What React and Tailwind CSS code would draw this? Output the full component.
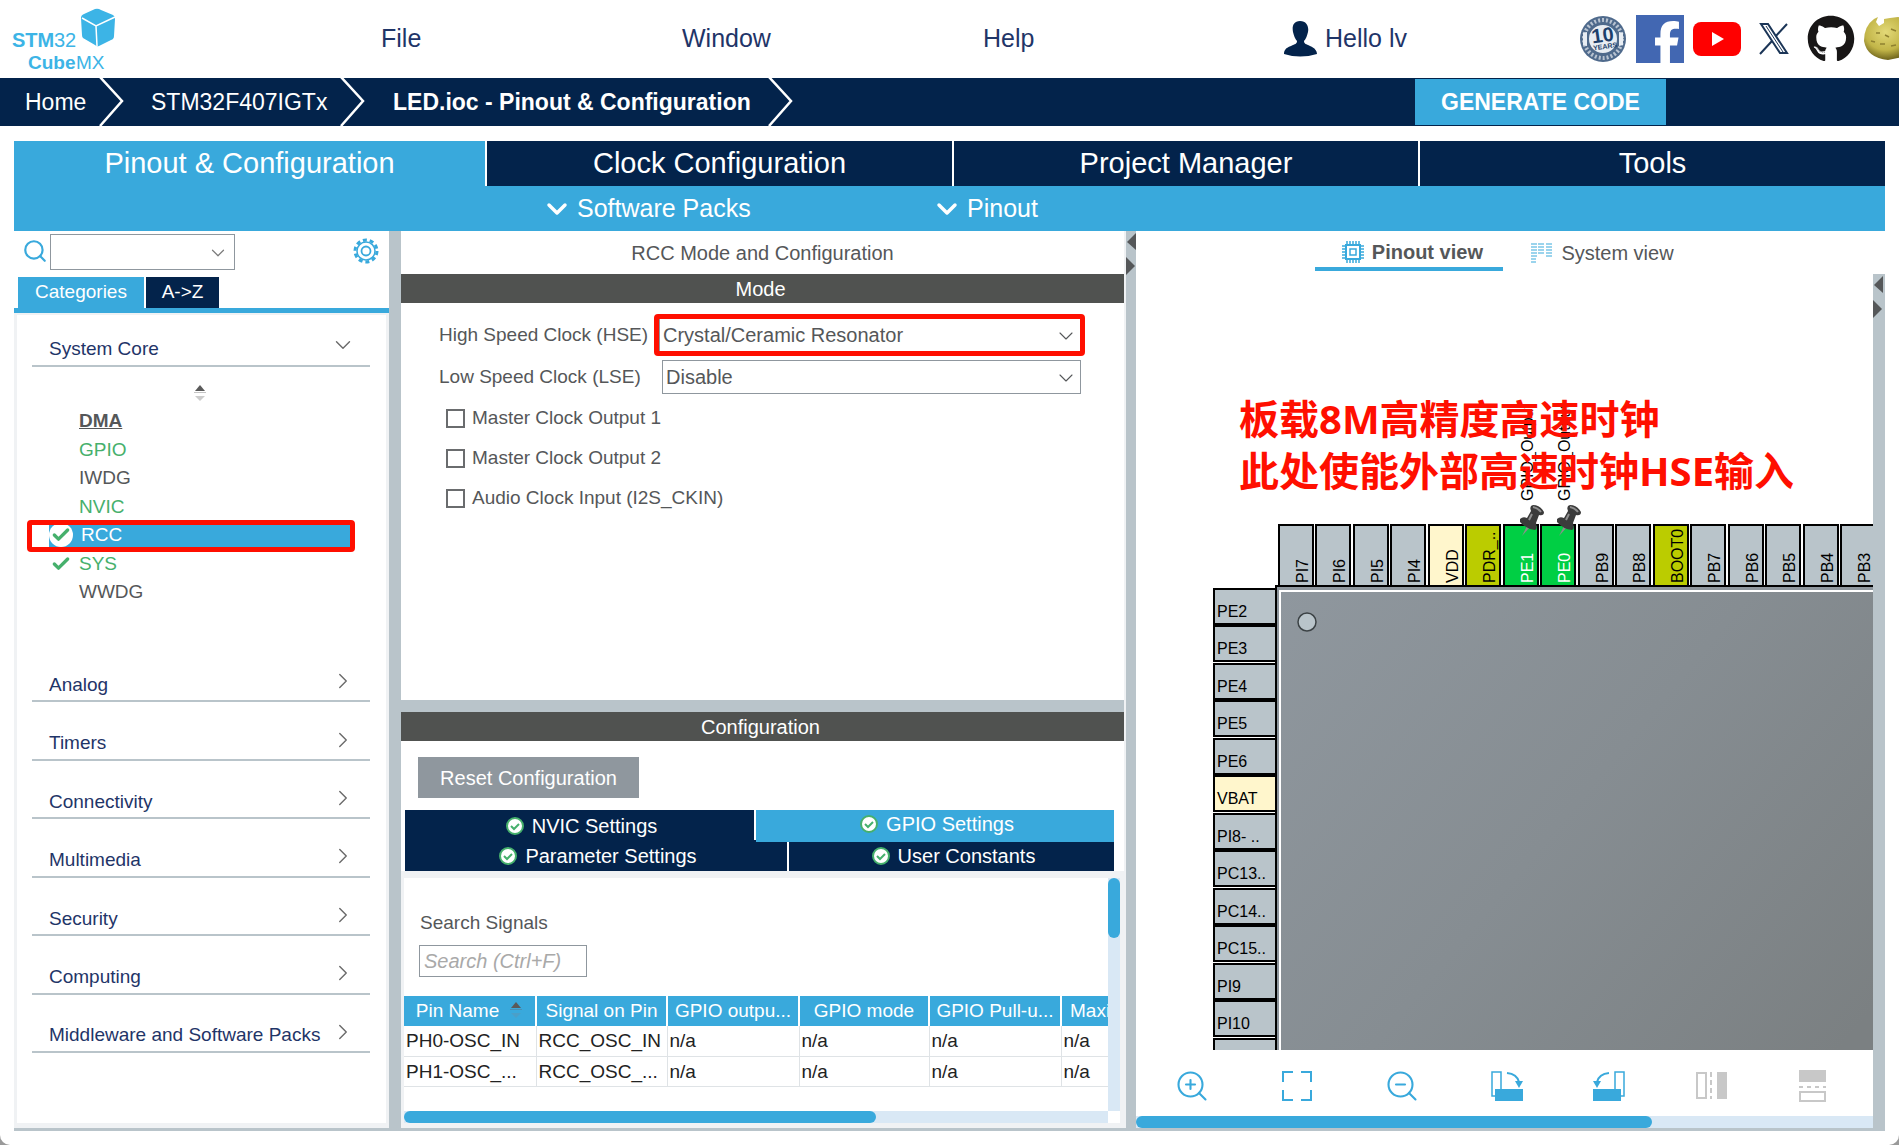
import React, { useState } from 'react'
import { Search, ChevronDown, ChevronRight, ZoomIn, ZoomOut, Check } from 'lucide-react'
import { FaGithub, FaFacebookF } from 'react-icons/fa6'

const MENU = ["File", "Window", "Help"]
const TABS = ["Pinout & Configuration", "Clock Configuration", "Project Manager", "Tools"]
const CATEGORIES = ["Analog", "Timers", "Connectivity", "Multimedia", "Security", "Computing", "Middleware and Software Packs"]

const CORE_ITEMS = [
  { name: "DMA", style: "text-[#555759] font-bold underline" },
  { name: "GPIO", style: "text-[#46b06c]" },
  { name: "IWDG", style: "text-[#555759]" },
  { name: "NVIC", style: "text-[#46b06c]" },
  { name: "RCC", style: "text-white", selected: true },
  { name: "SYS", style: "text-[#46b06c]", check: true },
  { name: "WWDG", style: "text-[#555759]" },
]

const COLUMNS = ["Pin Name", "Signal on Pin", "GPIO outpu...", "GPIO mode", "GPIO Pull-u...", "Maximum o..."]
const ROWS = [
  ["PH0-OSC_IN", "RCC_OSC_IN", "n/a", "n/a", "n/a", "n/a"],
  ["PH1-OSC_...", "RCC_OSC_...", "n/a", "n/a", "n/a", "n/a"],
]

const GRAY = "#b9c4ca"
const TOP_PINS = [
  ["PI7", GRAY], ["PI6", GRAY], ["PI5", GRAY], ["PI4", GRAY], ["VDD", "#fff6cc"], ["PDR_..", "#bbcc00"],
  ["PE1", "#00cf44"], ["PE0", "#00cf44"], ["PB9", GRAY], ["PB8", GRAY], ["BOOT0", "#bbcc00"],
  ["PB7", GRAY], ["PB6", GRAY], ["PB5", GRAY], ["PB4", GRAY], ["PB3", GRAY],
]
const LEFT_PINS = [
  ["PE2", GRAY], ["PE3", GRAY], ["PE4", GRAY], ["PE5", GRAY], ["PE6", GRAY], ["VBAT", "#fff6cc"],
  ["PI8- ..", GRAY], ["PC13..", GRAY], ["PC14..", GRAY], ["PC15..", GRAY], ["PI9", GRAY], ["PI10", GRAY], ["", GRAY],
]

function Logo() {
  return (
    <svg width="120" height="78" viewBox="0 0 120 78" role="img" aria-label="STM32 CubeMX">
      <g fill="#3cb4e6" fontFamily="Liberation Sans, sans-serif">
        <path d="M81 18 Q81 15 84 14 L95 9 Q98 8 101 10 L113 15 Q115 16 115 19 L114 36 Q114 39 111 40 L99 46 Q97 47 95 45 L83 38 Q82 37 82 35 Z" />
        <text x="12" y="47" fontSize="20" fontWeight="bold">STM</text>
        <text x="54" y="47" fontSize="20">32</text>
        <text x="28" y="69" fontSize="19" fontWeight="bold">Cube</text>
        <text x="76" y="69" fontSize="19">MX</text>
      </g>
      <path d="M82 18 L96 26 L115 17 M96 26 L97 46" stroke="white" strokeWidth="1.5" fill="none" />
    </svg>
  )
}

function Arrow() {
  return (
    <svg width="26" height="48" viewBox="0 0 26 48" fill="none" className="shrink-0">
      <path d="M1 -1 L23 23 L1 48" stroke="white" strokeWidth="2.5" />
    </svg>
  )
}

function AnniversaryBadge() {
  return (
    <svg width="48" height="48" viewBox="0 0 48 48" role="img" aria-label="10 years">
      <circle cx="24" cy="24" r="23" fill="#4f6a8c" />
      <circle cx="24" cy="24" r="19" fill="none" stroke="white" strokeWidth="4" strokeDasharray="2 2" opacity="0.6" />
      <path d="M4 18 L8 17 L8 31 L4 30 Z M44 18 L40 17 L40 31 L44 30 Z" fill="#e8edf3" />
      <circle cx="24" cy="24" r="15" fill="#e8edf3" stroke="#4f6a8c" strokeWidth="2" />
      <g transform="rotate(-8 24 24)" textAnchor="middle" fontWeight="bold" fill="#1d3f6b" fontFamily="Liberation Sans, sans-serif">
        <text x="24" y="27" fontSize="20">10</text>
        <text x="25" y="34" fontSize="7">YEARS</text>
      </g>
    </svg>
  )
}

function XLogo() {
  return (
    <svg width="30" height="32" viewBox="0 0 30 32" fill="none" stroke="#1b3557">
      <path d="M28 1 L16 14 M13 18 L1 31" strokeWidth="2" />
      <path d="M2 1 H9 L28 30 H21 Z" fill="white" strokeWidth="2" />
      <path d="M7 3 L24 29" strokeWidth="1" />
    </svg>
  )
}

function Globe() {
  return (
    <svg width="35" height="48" viewBox="0 0 35 48">
      <defs>
        <radialGradient id="globe" cx="0.45" cy="0.35" r="0.7">
          <stop offset="0" stopColor="#e3d978" />
          <stop offset="0.6" stopColor="#c2b548" />
          <stop offset="1" stopColor="#5c5212" />
        </radialGradient>
      </defs>
      <path d="M10 4 L14 2 L12 7 L15 11 L20 8 L20 4 L26 3 L34 2 L48 5 V40 L24 45 Q3 43 0 26 Q0 11 10 4 Z" fill="url(#globe)" />
      <path d="M12 18 h4 M21 20 l4 2 M7 26 l4 1 M16 29 h5 M27 14 l5 2 M27 31 l5 -1" stroke="#8f8130" strokeWidth="1.5" fill="none" />
    </svg>
  )
}

function Gear() {
  return (
    <svg width="26" height="26" viewBox="0 0 26 26" fill="none" stroke="#39a9dc">
      <circle cx="13" cy="13" r="11" strokeWidth="3" strokeDasharray="4 2.91" />
      <circle cx="13" cy="13" r="9" strokeWidth="1.5" />
      <circle cx="13" cy="13" r="4.5" strokeWidth="1.8" />
    </svg>
  )
}

function SortIcon({ light }) {
  return (
    <svg width="14" height="17" viewBox="0 0 14 17">
      <path d="M7 0 L12 6 H2 Z" fill="#5a5a5a" />
      <path d="M1 7.5 H13" stroke={light ? "#4b8fb4" : "#c4c4c4"} />
      <path d="M2 11 H12 L7 16 Z" fill={light ? "#4b9fc8" : "#cccccc"} />
    </svg>
  )
}

function ChipIcon() {
  return (
    <svg width="22" height="22" viewBox="0 0 22 22" fill="none" stroke="#39a9dc">
      <rect x="4" y="4" width="14" height="14" strokeWidth="2" />
      <rect x="8" y="8" width="6" height="6" strokeWidth="1.5" />
      <path d="M5 0 V4 M8 0 V4 M11 0 V4 M14 0 V4 M17 0 V4 M5 18 V22 M8 18 V22 M11 18 V22 M14 18 V22 M17 18 V22 M0 5 H4 M0 8 H4 M0 11 H4 M0 14 H4 M0 17 H4 M18 5 H22 M18 8 H22 M18 11 H22 M18 14 H22 M18 17 H22" strokeWidth="1.5" />
    </svg>
  )
}

function SystemIcon() {
  return (
    <svg width="22" height="22" viewBox="0 0 22 22" stroke="#39a9dc" strokeWidth="1.2">
      <path d="M0 2 H6 M7 2 H13 M15 2 H21 M0 5 H6 M7 5 H13 M15 5 H21 M0 8 H6 M7 8 H13 M15 8 H21 M0 11 H6 M7 11 H13 M15 11 H21 M0 14 H6 M15 14 H21 M0 17 H5 M0 20 H5" />
    </svg>
  )
}

function StatusIcon() {
  return (
    <svg width="18" height="18" viewBox="0 0 18 18">
      <circle cx="9" cy="9" r="8" fill="white" stroke="#46b06c" strokeWidth="2" />
      <path d="M5 9 L8 12 L13 7" stroke="#46b06c" strokeWidth="2" fill="none" />
    </svg>
  )
}

function SplitArrows() {
  return (
    <svg width="10" height="46" viewBox="0 0 10 46" fill="#555759">
      <path d="M10 2 V19 L1 11 Z" />
      <path d="M0 26 V44 L9 35 Z" />
    </svg>
  )
}

function Pushpin({ x, y }) {
  return (
    <g transform={`translate(${x} ${y})`}>
      <path d="M4 31 L10 19 L13 21 Z" fill="#8a8f8a" />
      <path d="M2 14 Q5 11 9 13 L13 6 Q11 1 15 0 Q22 0 26 7 Q26 11 21 10 L18 18 Q20 24 17 25 Q8 24 2 17 Z" fill="#3b3b3b" />
      <path d="M15 2 Q20 3 23 7 M14 9 L11 15" stroke="#8f8f8f" strokeWidth="2" fill="none" />
    </g>
  )
}

function ChipView() {
  return (
    <svg className="absolute inset-0 w-full h-full" fontFamily="Liberation Sans, sans-serif" fontSize="16">
      <defs>
        <linearGradient id="chip" gradientUnits="userSpaceOnUse" x1="145" y1="318" x2="700" y2="780">
          <stop offset="0" stopColor="#8f979e" />
          <stop offset="0.5" stopColor="#868d92" />
          <stop offset="1" stopColor="#7b8082" />
        </linearGradient>
      </defs>
      <rect x="140" y="312" width="1200" height="1200" fill="#8f979e" stroke="black" strokeWidth="2" />
      <rect x="144" y="317" width="1200" height="1200" fill="url(#chip)" stroke="white" strokeWidth="2" />
      <circle cx="171" cy="348" r="9" fill={GRAY} stroke="#3c4245" strokeWidth="1.5" />
      {TOP_PINS.map(([name, fill], i) => {
        const x = 143 + Math.floor(i * 37.5)
        return (
          <g key={name}>
            <rect x={x} y="251" width="34" height="61" fill={fill} stroke="black" strokeWidth="2" />
            <text transform={`translate(${x + 29} 309) rotate(-90)`} fill={name === "PE1" || name === "PE0" ? "white" : "black"}>{name}</text>
          </g>
        )
      })}
      {LEFT_PINS.map(([name, fill], i) => {
        const y = 315 + Math.floor(i * 37.5)
        return (
          <g key={name}>
            <rect x="78" y={y} width="62" height="35" fill={fill} stroke="black" strokeWidth="2" />
            <text x="81" y={y + 28}>{name}</text>
          </g>
        )
      })}
      <text transform="translate(397 227) rotate(-90)">GPIO_Output</text>
      <text transform="translate(434 227) rotate(-90)">GPIO_Output</text>
      <Pushpin x="382" y="231" />
      <Pushpin x="419" y="231" />
    </svg>
  )
}

function RotateIcon({ flip }) {
  return (
    <svg width="32" height="32" viewBox="0 0 32 32" className={flip ? "-scale-x-100" : ""}>
      <path d="M1 2 H10 V26 H1 Z" fill="white" stroke="#39a9dc" strokeWidth="1.5" />
      <rect x="4" y="19" width="28" height="12" fill="#39a9dc" />
      <path d="M16 3 Q26 4 28 12" stroke="#39a9dc" strokeWidth="2" fill="none" />
      <path d="M24 11 H32 L28 18 Z" fill="#39a9dc" />
    </svg>
  )
}

function Toolbar() {
  return (
    <div className="h-[66px] shrink-0 pl-[38px] pr-[46px] pt-1.5 flex items-center justify-between text-[#39a9dc]">
      <button aria-label="Zoom in"><ZoomIn size={36} strokeWidth={1.4} /></button>
      <button aria-label="Best fit">
        <svg width="32" height="32" viewBox="0 0 32 32" fill="none" stroke="#39a9dc" strokeWidth="2">
          <path d="M2 12 V2 H12 M20 2 H30 V12 M30 20 V30 H20 M12 30 H2 V20" />
        </svg>
      </button>
      <button aria-label="Zoom out"><ZoomOut size={36} strokeWidth={1.4} /></button>
      <button aria-label="Rotate right"><RotateIcon /></button>
      <button aria-label="Rotate left"><RotateIcon flip /></button>
      <button aria-label="Flip horizontally" disabled>
        <svg width="32" height="30" viewBox="0 0 32 30" fill="none" stroke="#c8c8c8">
          <rect x="1" y="2" width="9" height="25" strokeWidth="2" />
          <path d="M15 1 V28" strokeWidth="2" strokeDasharray="5 3" />
          <rect x="21" y="1" width="10" height="27" fill="#c8c8c8" stroke="none" />
        </svg>
      </button>
      <button aria-label="Flip vertically" disabled>
        <svg width="28" height="32" viewBox="0 0 28 32" fill="none" stroke="#c8c8c8">
          <rect x="0" y="0" width="27" height="12" fill="#c8c8c8" stroke="none" />
          <path d="M0 17 H27" strokeWidth="2" strokeDasharray="4 4" />
          <rect x="1" y="22" width="25" height="9" strokeWidth="2" />
        </svg>
      </button>
    </div>
  )
}

function Select({ id, value }) {
  return (
    <div className="relative flex-1">
      <select id={id} defaultValue={value} className="appearance-none w-full h-[34px] pl-[3px] border border-[#8f979e] bg-white text-[20px] outline-none">
        <option>{value}</option>
      </select>
      <ChevronDown size={24} strokeWidth={1.1} className="absolute right-[3px] top-1.5 pointer-events-none" />
    </div>
  )
}

function Sidebar() {
  return (
    <aside className="w-[375px] shrink-0 flex flex-col text-[19px]">
      <div className="h-[46px] pl-2 pr-2.5 pt-[3px] flex items-start gap-0.5">
        <Search size={26} strokeWidth={2} className="text-[#39a9dc] mt-1" />
        <div className="relative">
          <input aria-label="Search peripheral" className="w-[185px] h-9 border border-[#8f979e] px-2 outline-none" />
          <ChevronDown size={22} strokeWidth={1.3} className="absolute right-1.5 top-2 text-[#7a7a7a]" />
        </div>
        <button aria-label="Settings" className="ml-auto mt-1"><Gear /></button>
      </div>
      <div className="pl-1 flex gap-0.5 text-white border-b-5 border-[#39a9dc]">
        <button className="w-[126px] h-[31px] bg-[#39a9dc]">Categories</button>
        <button className="w-[73px] h-[31px] bg-[#03234b]">A-&gt;Z</button>
      </div>
      <div className="flex-1 min-h-0 border-[#f0f2f4] border-t-2 border-x-3 border-b-5 pl-[15px] pr-4">
        <button className="w-full h-[52px] border-b-2 border-[#b9c4ca] pl-[17px] pr-3.5 pt-2.5 flex items-center justify-between text-[#1f3568]">
          <span className="pt-2">System Core</span>
          <ChevronDown size={26} strokeWidth={1.3} className="text-[#6a6a6a]" />
        </button>
        <div className="pt-[18px] pl-[161px]"><SortIcon /></div>
        <ul className="relative flex flex-col h-[199px] mt-[5px]">
          {CORE_ITEMS.map((item) => (
            <li key={item.name} className={item.selected ? "flex-1 ml-[17px] mr-4 bg-[#39a9dc] flex items-center" : "flex-1 ml-[17px] mr-4 flex items-center"}>
              <span className={item.selected ? "w-6 h-6 mr-2 flex items-center justify-center rounded-full bg-white text-[#46b06c]" : "w-6 h-6 mr-1.5 flex items-center justify-center text-[#46b06c]"}>
                {(item.selected || item.check) && <Check size={20} strokeWidth={4} />}
              </span>
              <a href="#peripheral" className={item.style}>{item.name}</a>
            </li>
          ))}
          <div className="absolute -left-[5px] right-[15px] top-[113px] h-8 border-5 border-[#ff0f00] rounded-sm" />
        </ul>
        <div className="mt-[38px] h-[409px] flex flex-col">
          {CATEGORIES.map((name) => (
            <button key={name} className="flex-1 border-b-2 border-[#b9c4ca] pl-[17px] pr-2.5 flex items-center text-[#1f3568] whitespace-nowrap">
              <span className="pt-[26px]">{name}</span>
              <ChevronRight size={26} strokeWidth={1.3} className="text-[#6a6a6a] ml-auto mr-1 mt-[18px] shrink-0" />
            </button>
          ))}
        </div>
      </div>
    </aside>
  )
}

function ModePanel() {
  return (
    <section className="h-[469px] shrink-0 text-[#555759] text-[19px]">
      <h2 className="h-[43px] flex items-center justify-center text-[20px]">RCC Mode and Configuration</h2>
      <div className="h-[29px] bg-[#505250] text-white text-[20px] pr-1 flex items-center justify-center">Mode</div>
      <div className="pl-[38px] pr-[43px] pt-[15px]">
        <div className="relative flex items-center mb-2">
          <label htmlFor="hse" className="w-[220px] whitespace-nowrap">High Speed Clock (HSE)</label>
          <Select id="hse" value="Crystal/Ceramic Resonator" />
          <div className="absolute left-[215px] -right-1 -top-1 -bottom-1 border-5 border-[#ff0f00] rounded-sm pointer-events-none" />
        </div>
        <div className="flex items-center mb-1">
          <label htmlFor="lse" className="w-[223px] whitespace-nowrap">Low Speed Clock (LSE)</label>
          <Select id="lse" value="Disable" />
        </div>
        {["Master Clock Output 1", "Master Clock Output 2", "Audio Clock Input (I2S_CKIN)"].map((label) => (
          <label key={label} className="h-10 pl-[7px] flex items-center gap-[7px]">
            <input type="checkbox" className="appearance-none w-[19px] h-[19px] border-2 border-[#6a6c6e]" />
            {label}
          </label>
        ))}
      </div>
    </section>
  )
}

function ConfigTab({ label, active }) {
  return (
    <button className={active ? "relative z-10 h-8 pb-1 pl-1 bg-[#39a9dc] flex items-center justify-center gap-2" : "pl-1 bg-[#03234b] flex items-center justify-center gap-2"}>
      <StatusIcon />
      {label}
    </button>
  )
}

function ConfigPanel() {
  return (
    <section className="flex-1 min-h-0 flex flex-col bg-[#f0f2f4] text-[19px]">
      <div className="h-[29px] shrink-0 bg-[#505250] text-white text-[20px] pr-1 flex items-center justify-center">Configuration</div>
      <div className="bg-white pt-4 pl-1 pr-2.5 text-[20px] text-white">
        <button className="ml-[13px] w-[221px] h-[41px] bg-[#8f979e]">Reset Configuration</button>
        <div className="mt-3">
          <div className="grid grid-cols-[349fr_358fr] gap-0.5 h-7">
            <ConfigTab label="NVIC Settings" />
            <ConfigTab label="GPIO Settings" active />
          </div>
          <div className="mt-0.5 grid grid-cols-[382fr_325fr] gap-0.5 h-[31px]">
            <ConfigTab label="Parameter Settings" />
            <ConfigTab label="User Constants" />
          </div>
        </div>
      </div>
      <div className="flex-1 min-h-0 mt-[7px] ml-[3px] mr-[4px] mb-[5px] flex flex-col">
        <div className="flex-1 min-h-0 flex">
          <div className="flex-1 min-w-0 overflow-hidden bg-white">
            <div className="pl-[15px] pt-[31px] h-[118px]">
              <label htmlFor="signals" className="block h-9 pl-px text-[#555759]">Search Signals</label>
              <input id="signals" placeholder="Search (Ctrl+F)" className="w-[168px] h-8 border border-[#8f979e] px-1 text-[20px] italic placeholder:text-[#a9a9a9] outline-none" />
            </div>
            <table className="table-fixed w-[789px] border-collapse text-[#222]">
              <colgroup>
                <col className="w-[132px]" />
                <col className="w-[131px]" />
                <col className="w-[132px]" />
                <col className="w-[130px]" />
                <col className="w-[132px]" />
                <col className="w-[132px]" />
              </colgroup>
              <thead>
                <tr className="h-[30px] bg-[#39a9dc] text-white">
                  {COLUMNS.map((col, i) => (
                    <th key={col} className="p-0 font-normal border-r-2 border-white whitespace-nowrap">
                      <span className="inline-flex items-center gap-2.5 leading-[29px]">
                        {col}
                        {i === 0 && <SortIcon light />}
                      </span>
                    </th>
                  ))}
                </tr>
              </thead>
              <tbody>
                {ROWS.map((row) => (
                  <tr key={row[0]} className="h-[30px] border-b border-[#dfe3e6]">
                    {row.map((cell, i) => (
                      <td key={i} className="p-0 pl-0.5 border-r border-[#dfe3e6] whitespace-nowrap leading-[29px]">{cell}</td>
                    ))}
                  </tr>
                ))}
              </tbody>
            </table>
          </div>
          <div className="w-3 bg-[#d9e8f5]">
            <div className="h-[60px] rounded-full bg-[#39a9dc]" />
          </div>
        </div>
        <div className="h-3 flex">
          <div className="flex-1 bg-[#d9e8f5]">
            <div className="w-[67%] h-3 rounded-full bg-[#39a9dc]" />
          </div>
          <div className="w-3 bg-white" />
        </div>
      </div>
    </section>
  )
}

function App() {
  const [tab, setTab] = useState(TABS[0])

  return (
    <div className="h-screen bg-[#9a9a9a] font-['Liberation_Sans',Arial,sans-serif]">
      <div className="h-full flex flex-col bg-white rounded-b-[10px] pb-3.5 overflow-hidden">

        {/* Menu bar */}
        <header className="h-[78px] shrink-0 flex items-center text-[25px] text-[#1f3568] overflow-hidden">
          <div className="w-[381px] shrink-0"><Logo /></div>
          {MENU.map((name) => (
            <button key={name} className="w-[301px] text-left shrink-0">{name}</button>
          ))}
          <button className="flex items-center gap-2 shrink-0 whitespace-nowrap">
            <svg width="33" height="36" viewBox="0 0 33 36" fill="#03234b">
              <path d="M16 0 C9 0 8 6 9 11 C10 15 11 18 13 20 C13 23 11 23 7 25 C1 27 0 30 0 33 Q16 38 33 33 C33 30 31 27 26 25 C22 23 20 23 20 20 C22 18 23 15 24 11 C25 6 23 0 16 0 Z" />
            </svg>
            Hello lv
          </button>
          <div className="ml-auto shrink-0 flex items-center gap-[9px]">
            <a href="#years"><AnniversaryBadge /></a>
            <a href="#facebook" aria-label="Facebook" className="w-12 h-12 bg-[#4267b2] text-white flex items-end justify-end pr-1 overflow-hidden">
              <FaFacebookF size={42} className="translate-x-2" />
            </a>
            <a href="#youtube" aria-label="YouTube">
              <svg width="48" height="36" viewBox="0 0 48 36">
                <rect y="1" width="48" height="34" rx="8" fill="#ff0000" />
                <path d="M19 11 L31 18 L19 25 Z" fill="white" />
              </svg>
            </a>
            <a href="#x" aria-label="X" className="w-12 flex justify-center"><XLogo /></a>
            <a href="#github" aria-label="GitHub" className="text-[#181616]"><FaGithub size={48} /></a>
            <a href="#wiki" aria-label="Wiki"><Globe /></a>
          </div>
        </header>

        {/* Breadcrumb */}
        <nav className="h-12 shrink-0 bg-[#03234b] text-white text-[23px] flex items-center whitespace-nowrap">
          <a href="#home" className="w-[99px] pl-[25px]">Home</a>
          <Arrow />
          <a href="#mcu" className="w-[215px] pl-[26px]">STM32F407IGTx</a>
          <Arrow />
          <a href="#ioc" className="w-[402px] pl-[27px] font-bold">LED.ioc - Pinout &amp; Configuration</a>
          <Arrow />
          <button className="ml-auto mr-[233px] w-[251px] h-[46px] bg-[#39a9dc] font-bold">GENERATE CODE</button>
        </nav>

        <main className="flex-1 min-h-0 mt-[15px] mx-3.5 flex flex-col">
          <div className="h-[45px] shrink-0 grid grid-cols-[471fr_467fr_466fr_467fr] text-white text-[29px]">
            {TABS.map((name) => (
              <button
                key={name}
                onClick={() => setTab(name)}
                className={tab === name ? "bg-[#39a9dc]" : "bg-[#03234b] border-l-2 border-white"}
              >
                {name}
              </button>
            ))}
          </div>
          <div className="h-[45px] shrink-0 bg-[#39a9dc] text-white text-[25px] pl-[527px] flex items-center">
            {["Software Packs", "Pinout"].map((name) => (
              <button key={name} className="w-[390px] flex items-center gap-1">
                <ChevronDown size={32} strokeWidth={2.6} />
                {name}
              </button>
            ))}
          </div>

          <div className="flex-1 min-h-0 flex border-b-3 border-[#b9c4ca]">
            <Sidebar />
            <div className="w-3 shrink-0 bg-[#b9c4ca]" />
            <div className="flex-[724] min-w-0 flex flex-col border-r-2 border-[#f0f2f4]">
              <ModePanel />
              <div className="h-3 shrink-0 bg-[#b9c4ca]" />
              <ConfigPanel />
            </div>
            <div className="w-2.5 shrink-0 bg-[#b9c4ca]"><SplitArrows /></div>

            {/* Pinout view */}
            <section className="flex-[750] min-w-0 flex flex-col">
              <div className="h-[43px] shrink-0 flex justify-center gap-6 pl-2 text-[20px] text-[#555759]">
                <button className="w-[188px] h-10 pt-1.5 pl-1.5 border-b-4 border-[#39a9dc] font-bold flex items-center justify-center gap-2">
                  <ChipIcon />
                  Pinout view
                </button>
                <button className="h-10 pt-1 pl-1 pr-10 flex items-center gap-2">
                  <SystemIcon />
                  System view
                </button>
              </div>
              <div className="flex-1 min-h-0 flex">
                <div className="flex-1 min-w-0 flex flex-col">
                  <div className="relative flex-1 min-h-0 overflow-hidden">
                    <ChipView />
                    <p className="absolute left-[103px] top-[119px] whitespace-nowrap text-[40px] leading-[52px] font-bold text-[#ff0f00] font-['Open_Sans','Noto_Sans_CJK_SC',sans-serif]">
                      板载8M高精度高速时钟<br />
                      此处使能外部高速时钟HSE输入
                    </p>
                  </div>
                  <Toolbar />
                  <div className="h-3 shrink-0 bg-[#d9e8f5]">
                    <div className="w-[70%] h-3 rounded-full bg-[#39a9dc]" />
                  </div>
                </div>
                <div className="w-3 shrink-0 bg-[#b9c4ca]"><SplitArrows /></div>
              </div>
            </section>
          </div>
        </main>

      </div>
    </div>
  )
}

export default App
